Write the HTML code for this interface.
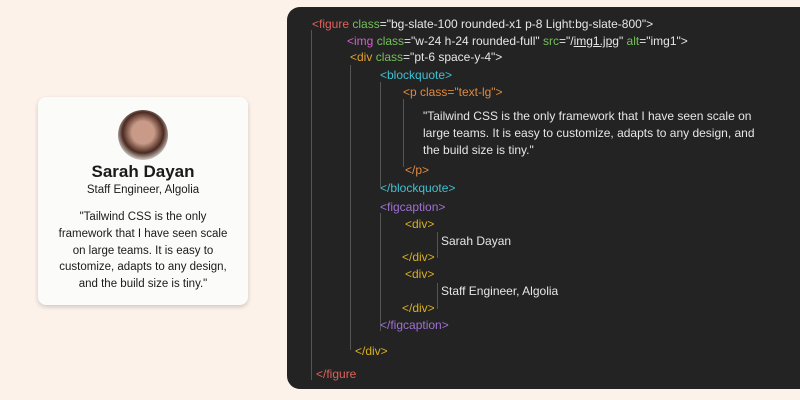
<!DOCTYPE html>
<html><head><style>
body{margin:0;width:800px;height:400px;background:#fcf2ea;position:relative;overflow:hidden;font-family:"Liberation Sans",sans-serif}
.card{position:absolute;left:38px;top:97px;width:210px;height:208px;background:#fbfbfa;border-radius:8px;box-shadow:0 2px 5px rgba(0,0,0,.18);text-align:center;color:#1a1a1a}
.av{position:absolute;left:118px;top:110px;width:50px;height:50px;border-radius:50%;background:radial-gradient(circle at 50% 45%,#c99a88 0 30%,#4a2a20 55%,#d8d4d0 75%)}
.panel{position:absolute;left:287px;top:7px;width:530px;height:382px;background:#232323;border-radius:13px}
.l{position:absolute;font-size:12px;white-space:nowrap;color:#e6e6e6;line-height:14px}
.v{position:absolute;width:1px;background:#555}
.r{color:#e0605a}.g{color:#74c05a}.m{color:#d060c8}.o{color:#e0a030}.c{color:#40c0d0}.p{color:#e08a40}.f{color:#a070d0}.y{color:#d8b020}
</style></head><body>
<div class="card">
<div style="position:absolute;top:65px;width:100%;font-weight:bold;font-size:17px">Sarah Dayan</div>
<div style="position:absolute;top:87px;width:100%;font-size:11.5px">Staff Engineer, Algolia</div>
<div style="position:absolute;top:112px;left:0;right:0;font-size:11.5px;line-height:16.8px;white-space:nowrap">"Tailwind CSS is the only<br>framework that I have seen scale<br>on large teams. It is easy to<br>customize, adapts to any design,<br>and the build size is tiny."</div>
</div>
<div class="av"></div>
<div class="panel"></div>
<div class="v" style="left:311px;top:30px;height:350px"></div>
<div class="v" style="left:350px;top:65px;height:285px"></div>
<div class="v" style="left:380px;top:82px;height:105px"></div>
<div class="v" style="left:403px;top:99px;height:68px"></div>
<div class="v" style="left:380px;top:213px;height:118px"></div>
<div class="v" style="left:437px;top:232px;height:26px"></div>
<div class="v" style="left:437px;top:283px;height:26px"></div>
<div class="l" style="left:312px;top:17px"><span class="r">&lt;figure</span> <span class="g">class</span>="bg-slate-100 rounded-x1 p-8 Light:bg-slate-800"&gt;</div>
<div class="l" style="left:347px;top:34px"><span class="m">&lt;img</span> <span class="g">class</span>="w-24 h-24 rounded-full" <span class="g">src</span>="/<u>img1.jpg</u>" <span class="g">alt</span>="img1"&gt;</div>
<div class="l" style="left:350px;top:50px"><span class="o">&lt;div</span> <span class="g">class</span>="pt-6 space-y-4"&gt;</div>
<div class="l c" style="left:380px;top:68px">&lt;blockquote&gt;</div>
<div class="l p" style="left:403px;top:85px">&lt;p class="text-lg"&gt;</div>
<div class="l" style="left:423px;top:108px;line-height:17px">"Tailwind CSS is the only framework that I have seen scale on<br>large teams. It is easy to customize, adapts to any design, and<br>the build size is tiny."</div>
<div class="l p" style="left:405px;top:163px">&lt;/p&gt;</div>
<div class="l c" style="left:380px;top:181px">&lt;/blockquote&gt;</div>
<div class="l f" style="left:380px;top:200px">&lt;figcaption&gt;</div>
<div class="l y" style="left:405px;top:217px">&lt;div&gt;</div>
<div class="l" style="left:441px;top:234px">Sarah Dayan</div>
<div class="l y" style="left:402px;top:250px">&lt;/div&gt;</div>
<div class="l y" style="left:405px;top:267px">&lt;div&gt;</div>
<div class="l" style="left:441px;top:284px">Staff Engineer, Algolia</div>
<div class="l y" style="left:402px;top:301px">&lt;/div&gt;</div>
<div class="l f" style="left:380px;top:318px">&lt;/figcaption&gt;</div>
<div class="l y" style="left:355px;top:344px">&lt;/div&gt;</div>
<div class="l r" style="left:316px;top:367px">&lt;/figure</div>
</body></html>
